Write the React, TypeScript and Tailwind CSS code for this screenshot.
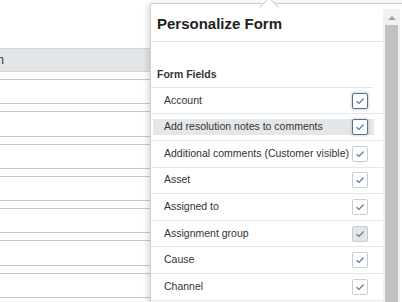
import React from 'react';

const fields = [
  { label: 'Account', focus: true },
  { label: 'Add resolution notes to comments', focus: true, highlight: true },
  { label: 'Additional comments (Customer visible)' },
  { label: 'Asset' },
  { label: 'Assigned to' },
  { label: 'Assignment group', disabled: true },
  { label: 'Cause' },
  { label: 'Channel' },
];

const Check = ({ focus, disabled }: { focus?: boolean; disabled?: boolean }) => (
  <div
    className={
      'shrink-0 w-[16px] h-[16px] rounded-[2px] border flex items-center justify-center ' +
      (focus
        ? 'border-[#5b6f8c] shadow-[0_0_2px_1px_rgba(120,150,200,0.35)] bg-white'
        : disabled
        ? 'border-[#c9c9c9] bg-[#e6e6e6]'
        : 'border-[#cccccc] bg-white')
    }
  >
    <svg width="10" height="8" viewBox="0 0 10 8">
      <path d="M1.5 4.2 L4 6.4 L8.6 1.6" fill="none" stroke="#5d86b3" strokeWidth="1.4" />
    </svg>
  </div>
);

export default function App() {
  return (
    <div className="relative w-[402px] h-[302px] overflow-hidden bg-white" style={{ fontFamily: '"Liberation Sans", Arial, sans-serif' }}>
      {/* page behind */}
      <div className="pt-[48px]">
        <div className="h-[24px] bg-[#e4e7ea] border-t border-b border-[#d3d6d9] flex items-center text-[12px] text-[#333]">
          <span className="-ml-[6px]">m</span>
        </div>
        {Array.from({ length: 7 }).map((_, i) => (
          <div key={i}>
            <div className="h-[8px] border-b border-[#c8c8c8]"></div>
            <div className="h-[24.3px] border-b border-[#c8c8c8]"></div>
          </div>
        ))}
      </div>

      {/* popover */}
      <div className="absolute left-[150px] top-[3px] w-[260px] h-[320px] bg-white border border-[#cfcfcf] rounded-tl-[3px] shadow-[-3px_0_5px_rgba(0,0,0,0.12)] flex">
        <div className="absolute -top-[4px] left-[111px] w-[14px] h-[14px] bg-white border-l border-t border-[#cfcfcf] rotate-45"></div>
        <div className="relative w-[232px] text-[#333]">
          <div className="h-[38px] border-b border-[#e2e2e2] flex items-center pl-[6px] pt-[3px]">
            <span className="text-[15px] font-bold text-[#222]">Personalize Form</span>
          </div>
          <div className="pt-[25px] pl-[6px] pb-[4px] text-[10.5px] font-bold text-[#333]">Form Fields</div>
          <div className="w-[222px] border-b border-[#e2e2e2]"></div>
          {fields.map((f) => (
            <div key={f.label} className="h-[26.6px] border-b border-[#e6e6e6] flex items-center pl-[2px] pr-[9px]">
              <div
                className={
                  'flex-1 h-[16px] flex items-center justify-between pl-[11px] pr-[6px] ' +
                  (f.highlight ? 'bg-[#e4e7ea]' : '')
                }
              >
                <span className="text-[10.5px] text-[#333] whitespace-nowrap">{f.label}</span>
                <Check focus={f.focus} disabled={f.disabled} />
              </div>
            </div>
          ))}
        </div>
        <div className="w-[17px] bg-[#f1f1f1] mt-[5px] flex flex-col items-center">
          <div className="h-[12px] flex items-end justify-center pb-[1px]">
            <div className="w-0 h-0 border-l-[4px] border-r-[4px] border-b-[4px] border-l-transparent border-r-transparent border-b-[#a3a3a3]"></div>
          </div>
          <div className="mt-[4px] w-[13px] flex-1 bg-[#c1c1c1]"></div>
        </div>
      </div>
    </div>
  );
}
